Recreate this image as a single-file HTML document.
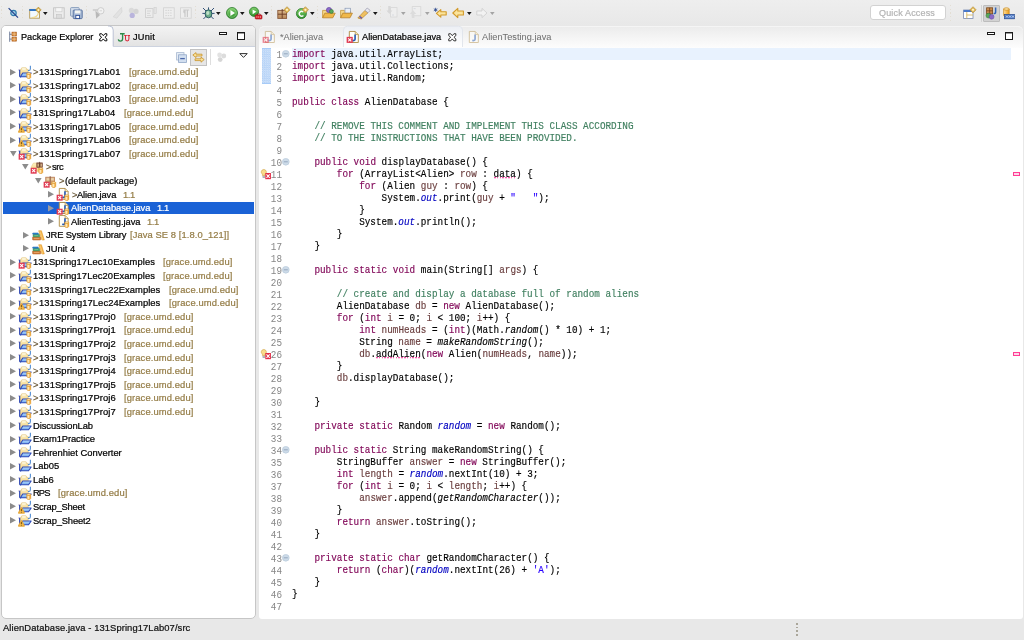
<!DOCTYPE html>
<html><head><meta charset="utf-8"><title>Eclipse</title>
<style>
html,body{margin:0;padding:0}
body{width:1024px;height:640px;overflow:hidden;position:relative;background:#e8e8e8;font-family:"Liberation Sans",sans-serif;}
.t{will-change:transform;position:absolute;white-space:pre;line-height:14px;height:14px;-webkit-text-stroke:0.22px}
.abs{position:absolute}
svg{position:absolute;overflow:visible}
symbol{overflow:visible}
#toolbar{position:absolute;left:0;top:0;width:1024px;height:26px;background:linear-gradient(#eeeeee,#e8e8e8);}
.panel{position:absolute;background:#fff;border:1px solid #d4d4d4;border-radius:6px;box-sizing:border-box;overflow:hidden}
.tabbar{position:absolute;left:0;top:0;right:0;height:20px;background:linear-gradient(#f4f4f4,#e6e6e6);border-bottom:1px solid #d0d0d0}
.code{will-change:transform;position:absolute;left:292px;height:12px;transform-origin:0 50%;transform:scaleY(1.08);font-family:"Liberation Mono",monospace;font-size:9.33px;line-height:12px;white-space:pre;color:#000;margin:0;-webkit-text-stroke:0.15px}
.ln{will-change:transform;position:absolute;left:261.2px;width:21px;height:12px;transform-origin:0 50%;transform:scaleY(1.08);text-align:right;font-family:"Liberation Mono",monospace;font-size:9.33px;line-height:12px;white-space:pre;color:#868686;margin:0}
.k{color:#7f0055}
.c{color:#3f7f5f}
.f{color:#0000c0;font-style:italic}
.v{color:#6a3e3e}
.s{color:#2a00ff}
.i{font-style:italic}
.e{background:repeating-linear-gradient(90deg,#f7359c 0 1.7px,transparent 1.7px 2.8px) 0 7.7px/100% 1.4px no-repeat}

</style></head>
<body>
<svg width="0" height="0" style="position:absolute">
<defs>
<linearGradient id="gBlue" x1="0" y1="0" x2="0" y2="1"><stop offset="0" stop-color="#bfe0fc"/><stop offset="1" stop-color="#68a4ee"/></linearGradient>
<linearGradient id="gYel" x1="0" y1="0" x2="0" y2="1"><stop offset="0" stop-color="#fdf1c4"/><stop offset="1" stop-color="#f3cf78"/></linearGradient>
<linearGradient id="gOr" x1="0" y1="0" x2="1" y2="0"><stop offset="0" stop-color="#fde0a0"/><stop offset="0.55" stop-color="#f6b84a"/><stop offset="1" stop-color="#e89c22"/></linearGradient>
<linearGradient id="gGreen" x1="0" y1="0" x2="0" y2="1"><stop offset="0" stop-color="#7fcf6a"/><stop offset="1" stop-color="#2f8f2c"/></linearGradient>
<linearGradient id="gBrown" x1="0" y1="0" x2="0" y2="1"><stop offset="0" stop-color="#d9b48a"/><stop offset="1" stop-color="#b98a5a"/></linearGradient>

<symbol id="d-cvs" viewBox="0 0 16 16"><path d="M10.9 10.6 v5.3 a2.6 1.2 0 0 0 5.2 0 v-5.3z" fill="#fbd185" stroke="#dd8d16" stroke-width="1"/><path d="M12.7 12 v4.4" stroke="#fff3d2" stroke-width="1.3"/><path d="M15.2 12 v4" stroke="#f0a030" stroke-width="0.9"/><ellipse cx="13.5" cy="10.6" rx="2.6" ry="1.2" fill="#fdebbc" stroke="#dd8d16" stroke-width="0.9"/></symbol>
<symbol id="d-err" viewBox="0 0 16 16"><rect x="-0.5" y="9.3" width="8.3" height="8.2" fill="#e03a52"/><path d="M1.6 11.3 l4.2 4.2 M5.8 11.3 l-4.2 4.2" stroke="#fff" stroke-width="1.5"/></symbol>
<symbol id="d-warn" viewBox="0 0 16 16"><path d="M3.4 9.4 L7.2 16.5 H-0.4z" fill="#f6c458" stroke="#e8aa3c" stroke-width="2" stroke-linejoin="round"/><path d="M3.4 11.2 v3 M3.4 15.1 v0.9" stroke="#5a4010" stroke-width="1.1"/></symbol>

<symbol id="i-proj" viewBox="0 0 16 16">
 <path d="M1.9 13.6 V4.7 h1.5 v-1.5 q0-0.7 0.7-0.7 h5.4 q0.7 0 0.7 0.7 v1.5 h2.5 v8.9z" fill="url(#gYel)" stroke="#dcbc6c" stroke-width="0.8"/>
 <rect x="4.4" y="3.4" width="4.8" height="1.4" fill="#fffdf2"/>
 <path d="M-0.7 5.5 h2.2" stroke="#6a62a8" stroke-width="1.1" fill="none"/><path d="M0.9 5.5 V13.9 q0 1 1 1 h1" stroke="#2f48b4" stroke-width="1.6" fill="none"/>
 <path d="M5.2 9.6 h11.6 l-3.6 5.2 h-11.2z" fill="url(#gBlue)" stroke="#2f4cba" stroke-width="1.5" stroke-linejoin="round"/>
 <path d="M15.7 -0.3 v4.2 q0 2.4 -2.2 2.4 h-1.2" stroke="#4f8bd2" stroke-width="1.5" fill="none"/>
</symbol>
<symbol id="i-src" viewBox="0 0 16 16">
 <path d="M0.6 14.6 V7.6 l2.8-4.8 h5 v5.8 h2.2 v6z" fill="url(#gYel)" stroke="#e4c880" stroke-width="0.7"/>
 <rect x="8" y="2.6" width="7.8" height="6.2" fill="#8e5e4a" stroke="#7a4a38" stroke-width="0.9"/>
 <path d="M9.9 3.8 v3.8 M14 3.8 v3.8" stroke="#f4dca4" stroke-width="1.3"/>
 <path d="M11.9 1.2 v7.6" stroke="#5a3222" stroke-width="1"/>
</symbol>
<symbol id="i-pkg" viewBox="0 0 16 16">
 <rect x="2.4" y="3" width="12.2" height="10.2" fill="#d9b38a" stroke="#b4774e" stroke-width="1"/>
 <rect x="3.8" y="4.4" width="3.6" height="3.2" fill="#ecd2a8"/><rect x="9.8" y="4.4" width="3.6" height="3.2" fill="#ecd2a8"/>
 <path d="M8.5 1.6 v11.6" stroke="#7a4630" stroke-width="1.1"/><path d="M2.4 8.6 h12.2" stroke="#b4774e" stroke-width="0.8"/>
</symbol>
<symbol id="i-jfile" viewBox="0 0 16 16">
 <path d="M1.8 0.6 h8 l4.2 4.2 v10.8 h-12.2z" fill="#fffef8" stroke="#ae8c44" stroke-width="1.25"/>
 <path d="M9.8 0.6 v4.2 h4.2" fill="#f5e8bc" stroke="#ae8c44" stroke-width="1"/>
 <path d="M9.6 4.6 v6.2 q0 2.8 -3.8 2" stroke="#2a5cb2" stroke-width="2.3" fill="none"/>
</symbol>
<symbol id="i-lib" viewBox="0 0 16 16">
 <rect x="0.9" y="10.9" width="11" height="4.2" rx="0.5" fill="#d4803e" stroke="#b0561c" stroke-width="0.8"/>
 <path d="M2.6 13 h7.4" stroke="#eeb078" stroke-width="1"/>
 <rect x="1.6" y="7.3" width="8.9" height="3.5" rx="0.5" fill="#3fa56a" stroke="#23804a" stroke-width="0.7"/>
 <path d="M3.2 9 h5.4" stroke="#8ed0a4" stroke-width="0.8"/>
 <rect x="0.9" y="5.4" width="7.8" height="1.9" rx="0.5" fill="#2f86d4" stroke="#1f62a8" stroke-width="0.6"/>
 <path d="M9.2 2.4 h3.8 l4 12.8 h-3.3z" fill="#f6b64a" stroke="#e0901c" stroke-width="0.7" stroke-linejoin="round"/>
 <path d="M11 3.4 l3.6 11.4" stroke="#fbd58c" stroke-width="0.9"/>
</symbol>
<symbol id="i-pkgexp" viewBox="0 0 16 16">
 <path d="M2.4 0.8 v14.4 M2.4 4.6 h3 M2.4 11.4 h3" stroke="#5a6a8a" stroke-width="1.2" fill="none"/>
 <rect x="5.6" y="1.6" width="6.2" height="5.4" fill="#d9893a" stroke="#a85a1a" stroke-width="0.9"/>
 <rect x="5.6" y="8.8" width="6.2" height="5.4" fill="#d9893a" stroke="#a85a1a" stroke-width="0.9"/>
 <path d="M5.6 4.3 h6.2 M8.7 1.6 v5.4 M5.6 11.5 h6.2 M8.7 8.8 v5.4" stroke="#f7dcb0" stroke-width="0.7"/>
</symbol>
</defs></svg>
<div id="toolbar"></div>
<div class="abs" style="left:0.50px;top:5.8px;width:1.2px;height:12.599999999999998px;background:repeating-linear-gradient(0deg,#e3ded4 0 1.2px,transparent 1.2px 3.7px)"></div>
<svg style="left:8.00px;top:7px" width="11" height="12" viewBox="0 0 11 12"><circle cx="5.5" cy="6" r="2.7" fill="#a4cde6" stroke="#2f7cad" stroke-width="1.2"/><path d="M0.6 1.2 L10 10.6" stroke="#22408a" stroke-width="1.2"/></svg>
<div class="abs" style="left:21.50px;top:5.8px;width:1.2px;height:12.599999999999998px;background:repeating-linear-gradient(0deg,#e3ded4 0 1.2px,transparent 1.2px 3.7px)"></div>
<svg style="left:29.00px;top:7px" width="13" height="12" viewBox="0 0 13 12"><rect x="0.7" y="2.4" width="9.8" height="8.8" fill="#f2f9ff" stroke="#b59a58" stroke-width="0.9"/><rect x="0.3" y="2" width="10.6" height="2" fill="#2f74c4"/><path d="M2.6 10.6 q6 0 6.8-5" stroke="#f0d890" stroke-width="1.2" fill="none"/><path d="M9.4 0.1 L12.2 2.9 L9.4 5.7 L6.6 2.9z" fill="#d8b050" stroke="#b08a30" stroke-width="0.6"/><circle cx="9.4" cy="2.9" r="1" fill="#fff4c8"/></svg>
<svg style="left:43.10px;top:12.10px" width="4.6" height="3"><path d="M0 0 H4.6 L2.3 3z" fill="#1a1a1a"/></svg>
<svg style="left:53.00px;top:7px" width="12" height="12" viewBox="0 0 12 12"><rect x="0.6" y="0.8" width="10.6" height="10.4" fill="#ececec" stroke="#c4c4c4" stroke-width="0.9"/><rect x="2.8" y="0.8" width="6.2" height="4" fill="#f6f6f6" stroke="#c8c8c8" stroke-width="0.6"/><rect x="3.4" y="7.4" width="5" height="3.8" fill="#dcdcdc" stroke="#c4c4c4" stroke-width="0.6"/></svg>
<svg style="left:70.00px;top:7px" width="13" height="12" viewBox="0 0 13 12"><rect x="0.6" y="0.6" width="8.6" height="8.6" rx="0.8" fill="#d5dfec" stroke="#7f96b8" stroke-width="0.9"/><rect x="3.2" y="3" width="9" height="8.6" rx="0.8" fill="#a9bbd6" stroke="#4f6b9c" stroke-width="0.9"/><rect x="5" y="3.4" width="5.4" height="3" fill="#f4f6f2"/><rect x="5.8" y="8.4" width="3.8" height="3.2" fill="#fff" stroke="#2f4f94" stroke-width="0.9"/></svg>
<div class="abs" style="left:85.50px;top:5.8px;width:1.2px;height:12.599999999999998px;background:repeating-linear-gradient(0deg,#e3ded4 0 1.2px,transparent 1.2px 3.7px)"></div>
<svg style="left:92.00px;top:7px" width="13" height="12" viewBox="0 0 13 12"><circle cx="8.8" cy="3.8" r="3.2" fill="#f2f2f2" stroke="#cacaca" stroke-width="0.9"/><path d="M0.8 3 h5.4" stroke="#c8c8c8" stroke-width="1.4"/><path d="M3.4 3.4 L8 8 L4.2 11.8z" fill="#b8b8b8"/><path d="M7.6 3.8 h2.4" stroke="#c8c8c8" stroke-width="0.7"/></svg>
<svg style="left:112.00px;top:7px" width="11" height="12" viewBox="0 0 11 12"><path d="M9.6 0.4 L1.2 9.8 l3.6 1.4 L10 5z" fill="#e2e2e2" stroke="#d2d2d2" stroke-width="0.6"/></svg>
<svg style="left:127.50px;top:7px" width="11" height="12" viewBox="0 0 11 12"><circle cx="3.4" cy="3.4" r="2.6" fill="#dadada"/><circle cx="8" cy="4.4" r="2.6" fill="#d4d4d4"/><circle cx="4.2" cy="8.4" r="2.6" fill="#b9b4dc"/></svg>
<svg style="left:145.00px;top:7px" width="12" height="12" viewBox="0 0 12 12"><rect x="0.6" y="1.6" width="7.4" height="9" fill="#ececec" stroke="#cdcdcd" stroke-width="0.8"/><path d="M2 4 h4 M2 6.4 h3 M2 8.6 h4" stroke="#d0d0d0" stroke-width="0.8"/><rect x="9" y="0.6" width="2.2" height="6" fill="#e6e6e6" stroke="#cdcdcd" stroke-width="0.6"/></svg>
<svg style="left:162.50px;top:7px" width="12" height="12" viewBox="0 0 12 12"><rect x="0.6" y="0.8" width="10.6" height="10.4" fill="#eeeeee" stroke="#d0d0d0" stroke-width="0.8"/><path d="M2.4 3.4 h7 M2.4 6 h7 M2.4 8.6 h7" stroke="#cfcfcf" stroke-width="0.9" stroke-dasharray="1.4 1"/></svg>
<svg style="left:180.00px;top:7px" width="12" height="12" viewBox="0 0 12 12"><rect x="0.6" y="0.8" width="10.6" height="10.4" fill="#eeeeee" stroke="#d0d0d0" stroke-width="0.8"/><path d="M5 3 v7 M7.4 3 v7 M3.2 3 h6" stroke="#cacaca" stroke-width="1.2" fill="none"/><path d="M5 3 a1.8 1.8 0 0 0 0 3.6z" fill="#cacaca"/></svg>
<div class="abs" style="left:194.50px;top:5.8px;width:1.2px;height:12.599999999999998px;background:repeating-linear-gradient(0deg,#e3ded4 0 1.2px,transparent 1.2px 3.7px)"></div>
<svg style="left:201.50px;top:7px" width="13" height="12" viewBox="0 0 13 12"><path d="M1 1 l3 3 M12 1 l-3 3 M0.4 6.4 h3 M12.6 6.4 h-3 M1.4 12 l3-3 M11.6 12 l-3-3 M6.5 0.4 v2.4" stroke="#1f3f6a" stroke-width="0.9"/><ellipse cx="6.5" cy="6.8" rx="3.4" ry="4" fill="#6fae8a" stroke="#1f4f5a" stroke-width="0.9"/><ellipse cx="5.8" cy="6" rx="1.6" ry="2" fill="#bfe0c8"/></svg>
<svg style="left:216.10px;top:12.10px" width="4.6" height="3"><path d="M0 0 H4.6 L2.3 3z" fill="#1a1a1a"/></svg>
<svg style="left:225.50px;top:7px" width="12" height="12" viewBox="0 0 12 12"><circle cx="6" cy="6" r="5.5" fill="url(#gGreen)" stroke="#2a7a2a" stroke-width="0.8"/><circle cx="6" cy="6" r="4.2" fill="none" stroke="#a8e09a" stroke-width="0.5"/><path d="M4.4 3 L9 6 L4.4 9z" fill="#fff"/></svg>
<svg style="left:240.00px;top:12.10px" width="4.6" height="3"><path d="M0 0 H4.6 L2.3 3z" fill="#1a1a1a"/></svg>
<svg style="left:249.00px;top:6.5px" width="13" height="13" viewBox="0 0 13 13"><circle cx="5" cy="4.8" r="4.6" fill="url(#gGreen)" stroke="#2a7a2a" stroke-width="0.8"/><path d="M3.6 2.4 L7.4 4.8 L3.6 7.2z" fill="#fff"/><rect x="6.2" y="8" width="6.8" height="4" rx="0.8" fill="#d8202a" stroke="#9a1018" stroke-width="0.6"/><path d="M8 8 v-1 h3.2 v1" stroke="#9a1018" stroke-width="0.7" fill="none"/><path d="M7.4 10 h1 M9.2 10 h1 M11 10 h1" stroke="#fff" stroke-width="0.8"/></svg>
<svg style="left:263.90px;top:12.10px" width="4.6" height="3"><path d="M0 0 H4.6 L2.3 3z" fill="#1a1a1a"/></svg>
<div class="abs" style="left:270.50px;top:5.8px;width:1.2px;height:12.599999999999998px;background:repeating-linear-gradient(0deg,#e3ded4 0 1.2px,transparent 1.2px 3.7px)"></div>
<svg style="left:277.00px;top:7px" width="13" height="12" viewBox="0 0 13 12"><rect x="0.8" y="3.4" width="8.8" height="8" fill="url(#gBrown)" stroke="#8a5a3a" stroke-width="0.9"/><path d="M5.2 2 v9.4 M0.8 7.2 h8.8" stroke="#6a3a22" stroke-width="0.9"/><path d="M10.0 -0.3 L13.1 2.8 L10.0 5.9 L6.9 2.8z" fill="#e0b85a" stroke="#b08a30" stroke-width="0.6"/><circle cx="10.0" cy="2.8" r="1.1" fill="#fff4c8"/></svg>
<svg style="left:296.00px;top:7px" width="12" height="12" viewBox="0 0 12 12"><circle cx="5.4" cy="6.6" r="5" fill="url(#gGreen)" stroke="#2a7a2a" stroke-width="0.8"/><path d="M7.4 5 a2.4 2.4 0 1 0 0 3.4" stroke="#fff" stroke-width="1.4" fill="none"/><path d="M9.4 -0.3 L12.5 2.8 L9.4 5.9 L6.3 2.8z" fill="#e0b85a" stroke="#b08a30" stroke-width="0.6"/><circle cx="9.4" cy="2.8" r="1.1" fill="#fff4c8"/></svg>
<svg style="left:309.70px;top:12.10px" width="4.6" height="3"><path d="M0 0 H4.6 L2.3 3z" fill="#1a1a1a"/></svg>
<div class="abs" style="left:317.00px;top:5.8px;width:1.2px;height:12.599999999999998px;background:repeating-linear-gradient(0deg,#e3ded4 0 1.2px,transparent 1.2px 3.7px)"></div>
<svg style="left:322.00px;top:7px" width="14" height="12" viewBox="0 0 14 12"><path d="M0.6 10.8 V3.4 h3.6 l1 1.2 h5.4 v2" fill="#f4d78a" stroke="#c8983a" stroke-width="0.8"/><path d="M0.6 10.8 l2.2-4.6 h10.4 l-2.4 4.6z" fill="#f0b84a" stroke="#b8802a" stroke-width="0.8"/><circle cx="7" cy="3" r="2.6" fill="#8a6ac8" stroke="#5a3a9a" stroke-width="0.6"/><circle cx="9.4" cy="4.4" r="2" fill="#58a858" stroke="#2f6f2f" stroke-width="0.5"/></svg>
<svg style="left:340.00px;top:7px" width="13" height="12" viewBox="0 0 13 12"><path d="M0.6 10.8 V3.4 h3.6 l1 1.2 h5.4 v2" fill="#f4d78a" stroke="#c8983a" stroke-width="0.8"/><rect x="5" y="1.2" width="5.4" height="5" fill="#e8eef8" stroke="#7a8aa8" stroke-width="0.6"/><path d="M0.6 10.8 l2.2-4.6 h9.6 l-2.4 4.6z" fill="#f0b84a" stroke="#b8802a" stroke-width="0.8"/></svg>
<svg style="left:357.00px;top:7px" width="14" height="12" viewBox="0 0 14 12"><path d="M0.8 11 L8 3.4 l3 2.4 L4.2 12z" fill="#f0c060" stroke="#b8862a" stroke-width="0.7"/><path d="M8 3.4 l2.2-2.4 l3 2.4 l-2.2 2.4z" fill="#e8e8f0" stroke="#8a8aa0" stroke-width="0.6"/><path d="M2.4 9.4 l2.6 2" stroke="#6a5ab0" stroke-width="1.4"/></svg>
<svg style="left:372.70px;top:12.10px" width="4.6" height="3"><path d="M0 0 H4.6 L2.3 3z" fill="#1a1a1a"/></svg>
<div class="abs" style="left:380.00px;top:5.8px;width:1.2px;height:12.599999999999998px;background:repeating-linear-gradient(0deg,#e3ded4 0 1.2px,transparent 1.2px 3.7px)"></div>
<svg style="left:385.50px;top:6.4px" width="12" height="12" viewBox="0 0 12 12"><rect x="4.6" y="1.6" width="6.4" height="9.4" fill="#eeeeee" stroke="#d6d6d6" stroke-width="0.8"/><path d="M2.2 0 h2.4 v4.4 h1.8 l-3 3.6 l-3-3.6 h1.8z" fill="#d8d8d8"/><path d="M6 9 h2" stroke="#d0d4dc" stroke-width="0.8"/></svg>
<svg style="left:400.70px;top:12.10px" width="4.6" height="3"><path d="M0 0 H4.6 L2.3 3z" fill="#a4a4a4"/></svg>
<svg style="left:409.60px;top:6.2px" width="12" height="12" viewBox="0 0 12 12"><rect x="2.2" y="0.6" width="8.6" height="9.2" fill="#eeeeee" stroke="#d6d6d6" stroke-width="0.8"/><path d="M1.8 12 h2.6 v-4 h1.9 l-3.2-3.8 l-3.2 3.8 h1.9z" fill="#dcdcdc"/><path d="M3.6 2.6 h2" stroke="#d0d4dc" stroke-width="0.8"/></svg>
<svg style="left:425.10px;top:12.10px" width="4.6" height="3"><path d="M0 0 H4.6 L2.3 3z" fill="#a4a4a4"/></svg>
<svg style="left:433.00px;top:7px" width="14" height="12" viewBox="0 0 14 12"><path d="M3.4 6.4 l4.4-3.8 v2.2 h5.4 v3.2 h-5.4 v2.2z" fill="#fbe49c" stroke="#d29a2a" stroke-width="1.1" stroke-linejoin="round"/><path d="M2.6 0.8 v4 M0.8 1.8 l3.6 2 M4.4 1.8 l-3.6 2" stroke="#2a468c" stroke-width="0.8"/></svg>
<svg style="left:451.50px;top:7px" width="12" height="12" viewBox="0 0 12 12"><path d="M0.8 6 l5-4.6 v2.6 h5.6 v4 h-5.6 v2.6z" fill="#fbe49c" stroke="#d29a2a" stroke-width="1.1" stroke-linejoin="round"/></svg>
<svg style="left:466.70px;top:12.10px" width="4.6" height="3"><path d="M0 0 H4.6 L2.3 3z" fill="#1a1a1a"/></svg>
<svg style="left:476.00px;top:7px" width="12" height="12" viewBox="0 0 12 12"><path d="M11 6 l-5-4.6 v2.6 h-5.2 v4 h5.2 v2.6z" fill="#f2f2f2" stroke="#d0d0d0" stroke-width="0.9" stroke-linejoin="round"/></svg>
<svg style="left:490.30px;top:12.10px" width="4.6" height="3"><path d="M0 0 H4.6 L2.3 3z" fill="#a4a4a4"/></svg>
<div class="abs" style="left:870px;top:5.2px;width:75.5px;height:14.4px;box-sizing:border-box;border:1px solid #d2d2d2;border-radius:3px;background:#fff"></div>
<span class="t" style="left:878.80px;top:5.90px;font-size:9px;letter-spacing:0.164px;color:#b4b4b4;">Quick Access</span>
<div class="abs" style="left:949.50px;top:4px;width:1.2px;height:17px;background:repeating-linear-gradient(0deg,#e3ded4 0 1.2px,transparent 1.2px 3.7px)"></div>
<svg style="left:963.00px;top:7px" width="13" height="12" viewBox="0 0 13 12"><rect x="0.6" y="3" width="9.4" height="8.4" fill="#fff" stroke="#7a8ab0" stroke-width="0.8"/><rect x="0.6" y="3" width="9.4" height="2" fill="#4a78c8"/><path d="M3.8 5 v6.4 M3.8 8 h6.2" stroke="#d8b860" stroke-width="0.9"/><path d="M10.0 -0.3 L13.1 2.8 L10.0 5.9 L6.9 2.8z" fill="#e0b85a" stroke="#b08a30" stroke-width="0.6"/><circle cx="10.0" cy="2.8" r="1.1" fill="#fff4c8"/></svg>
<div class="abs" style="left:980.5px;top:5px;width:1px;height:17px;background:#d4d4d4"></div>
<div class="abs" style="left:982.5px;top:5px;width:17.5px;height:17px;box-sizing:border-box;border:1px solid #bdbdbd;background:#d2d2d2;border-radius:1px"></div>
<svg style="left:985.00px;top:7px" width="13" height="13" viewBox="0 0 13 13"><rect x="1.6" y="0.8" width="6" height="6" fill="#c88a4a" stroke="#7a4a22" stroke-width="0.8"/><path d="M4.6 0.8 v6 M1.6 3.8 h6" stroke="#6a3a1a" stroke-width="0.7"/><path d="M10.6 0.6 v4.6 q0 1.6 -2 1.4" stroke="#2f63b8" stroke-width="1.5" fill="none"/><circle cx="3.4" cy="8.6" r="2.4" fill="#58a858" stroke="#2f6f2f" stroke-width="0.5"/><circle cx="6.6" cy="9.8" r="2.4" fill="#8a6ac8" stroke="#5a3a9a" stroke-width="0.5"/></svg>
<svg style="left:1002.40px;top:7px" width="13" height="13" viewBox="0 0 13 13"><path d="M1.6 2 v6.4 a2.8 1.2 0 0 0 5.6 0 v-6.4z" fill="url(#gOr)" stroke="#c8861a" stroke-width="0.7"/><ellipse cx="4.4" cy="2" rx="2.8" ry="1.2" fill="#fbe3a6" stroke="#c8861a" stroke-width="0.7"/><rect x="2.6" y="7.4" width="10" height="4.4" fill="#4a78c8" stroke="#2a4a8a" stroke-width="0.7"/><path d="M4 8.6 l2 2 M6 8.6 l-2 2 M7 8.6 l2 2 M9 8.6 l-2 2 M10 8.6 l2 2 M12 8.6 l-2 2" stroke="#fff" stroke-width="0.6"/></svg>
<div class="panel" style="left:1px;top:25px;width:255.4px;height:593.8px;border-color:#c6c6c6;border-radius:5px"><div class="tabbar" style="height:19.6px;background:linear-gradient(#f3f3f3,#e3e3e3);border-bottom:1px solid #cdd3df"></div></div>
<svg style="left:0px;top:0px" width="130" height="50" viewBox="0 0 130 50"><path d="M2 47.4 V30.5 Q2 26 6.5 26 H109.2 Q113.2 26 113.2 30 V47.4z" fill="#fff"/><path d="M108 26 H109.2 Q113.2 26 113.2 30 V46.4" fill="none" stroke="#b4bcd0" stroke-width="0.9"/></svg>
<svg style="left:7.60px;top:30.60px;" width="11.4" height="11.4"><use href="#i-pkgexp"/></svg>
<span class="t" style="left:20.80px;top:30.30px;font-size:9.2px;letter-spacing:-0.008px;color:#000;">Package Explorer</span>
<svg style="left:98.6px;top:32.6px" width="8.6" height="8.6" viewBox="0 0 9 9"><path d="M0.8 0.8 h2 L4.5 2.8 L6.2 0.8 h2 v2 L6.2 4.5 L8.2 6.2 v2 h-2 L4.5 6.2 L2.8 8.2 h-2 v-2 L2.8 4.5 L0.8 2.8z" fill="#fff" stroke="#000" stroke-width="1"/></svg>
<svg style="left:117px;top:32px" width="14" height="10" viewBox="0 0 14 10"><path d="M3 1.7 H7.7 M5.6 1.7 V6.8 Q5.6 9.1 3.3 9.1 Q1.5 9.1 1.3 7.4" fill="none" stroke="#2c8a48" stroke-width="1.35"/><path d="M7.2 3.5 h2.6 M10.4 3.5 h2.6 M8.5 3.5 V7.1 Q8.5 9 10.2 9 Q11.9 9 11.9 7.1 V3.5" fill="none" stroke="#d8283a" stroke-width="1.05"/></svg>
<span class="t" style="left:133.00px;top:30.30px;font-size:9.2px;letter-spacing:0.212px;color:#000;">JUnit</span>
<div class="abs" style="left:219px;top:32px;width:8px;height:3px;box-sizing:border-box;border:1px solid #1a1a1a;background:#fff"></div><div class="abs" style="left:237.2px;top:32.2px;width:8.2px;height:7.6px;box-sizing:border-box;border:1.1px solid #1a1a1a;background:linear-gradient(#999 0 1.4px,#fff 1.4px)"></div>
<svg style="left:176px;top:52px" width="11" height="11" viewBox="0 0 11 11"><rect x="0.6" y="0.6" width="7.4" height="7.4" fill="#e6edf6" stroke="#a9b9d0" stroke-width="0.8"/><rect x="2.6" y="2.8" width="7.8" height="7.6" fill="#d2dff0" stroke="#8fa5c6" stroke-width="0.8"/><path d="M4.2 6.6 h4.6" stroke="#4a66a8" stroke-width="1.3"/></svg>
<div class="abs" style="left:190px;top:48.5px;width:17.4px;height:17.2px;box-sizing:border-box;border:1px solid #c2c2c2;background:#e6e6e6"></div>
<svg style="left:192.4px;top:51.6px" width="13" height="11" viewBox="0 0 13 11"><path d="M0.8 3 L4 0.6 v1.6 h6 v1.8 h-6 v1.6z" fill="#fbe39a" stroke="#c8922a" stroke-width="0.8" stroke-linejoin="round"/><path d="M12.2 7.6 L9 5.2 v1.6 h-6 v1.8 h6 v1.6z" fill="#fbe39a" stroke="#c8922a" stroke-width="0.8" stroke-linejoin="round"/></svg>
<div class="abs" style="left:210px;top:49px;width:1px;height:16px;background:#dedede"></div>
<svg style="left:216px;top:52px" width="11" height="11" viewBox="0 0 11 11"><circle cx="3.6" cy="3" r="2.4" fill="#e2e2e2"/><circle cx="7.8" cy="4" r="2.4" fill="#dcdcdc"/><circle cx="4.2" cy="7.6" r="2.4" fill="#d6d6d6"/></svg>
<svg style="left:239px;top:53px" width="9" height="5" viewBox="0 0 9 5"><path d="M0.8 0.6 H8.2 L4.5 4.4z" fill="#fff" stroke="#1a1a1a" stroke-width="0.9" stroke-linejoin="round"/></svg>
<svg style="left:9.60px;top:68.65px" width="6" height="6.6"><path d="M0 0 V6.6 L6 3.3z" fill="#8c8c8c"/></svg>
<svg style="left:18.50px;top:65.95px;" width="11.6" height="11.6"><use href="#i-proj"/></svg>
<svg style="left:18.50px;top:65.95px;" width="11.6" height="11.6"><use href="#d-cvs"/></svg>
<span class="t" style="left:33.00px;top:65.25px;font-size:9.4px;letter-spacing:0.000px;color:#6b5a3a;">&gt;</span>
<span class="t" style="left:39.40px;top:65.25px;font-size:9.4px;letter-spacing:0.147px;color:#000;">131Spring17Lab01</span>
<span class="t" style="left:129.00px;top:65.25px;font-size:9.4px;letter-spacing:0.117px;color:#957d47;">[grace.umd.edu]</span>
<svg style="left:9.60px;top:82.24px" width="6" height="6.6"><path d="M0 0 V6.6 L6 3.3z" fill="#8c8c8c"/></svg>
<svg style="left:18.50px;top:79.54px;" width="11.6" height="11.6"><use href="#i-proj"/></svg>
<svg style="left:18.50px;top:79.54px;" width="11.6" height="11.6"><use href="#d-cvs"/></svg>
<span class="t" style="left:33.00px;top:78.84px;font-size:9.4px;letter-spacing:0.000px;color:#6b5a3a;">&gt;</span>
<span class="t" style="left:39.40px;top:78.84px;font-size:9.4px;letter-spacing:0.147px;color:#000;">131Spring17Lab02</span>
<span class="t" style="left:129.00px;top:78.84px;font-size:9.4px;letter-spacing:0.117px;color:#957d47;">[grace.umd.edu]</span>
<svg style="left:9.60px;top:95.82px" width="6" height="6.6"><path d="M0 0 V6.6 L6 3.3z" fill="#8c8c8c"/></svg>
<svg style="left:18.50px;top:93.12px;" width="11.6" height="11.6"><use href="#i-proj"/></svg>
<svg style="left:18.50px;top:93.12px;" width="11.6" height="11.6"><use href="#d-cvs"/></svg>
<span class="t" style="left:33.00px;top:92.42px;font-size:9.4px;letter-spacing:0.000px;color:#6b5a3a;">&gt;</span>
<span class="t" style="left:39.40px;top:92.42px;font-size:9.4px;letter-spacing:0.147px;color:#000;">131Spring17Lab03</span>
<span class="t" style="left:129.00px;top:92.42px;font-size:9.4px;letter-spacing:0.117px;color:#957d47;">[grace.umd.edu]</span>
<svg style="left:9.60px;top:109.41px" width="6" height="6.6"><path d="M0 0 V6.6 L6 3.3z" fill="#8c8c8c"/></svg>
<svg style="left:18.50px;top:106.71px;" width="11.6" height="11.6"><use href="#i-proj"/></svg>
<svg style="left:18.50px;top:106.71px;" width="11.6" height="11.6"><use href="#d-cvs"/></svg>
<span class="t" style="left:33.00px;top:106.01px;font-size:9.4px;letter-spacing:0.203px;color:#000;">131Spring17Lab04</span>
<span class="t" style="left:123.50px;top:106.01px;font-size:9.4px;letter-spacing:0.117px;color:#957d47;">[grace.umd.edu]</span>
<svg style="left:9.60px;top:123.00px" width="6" height="6.6"><path d="M0 0 V6.6 L6 3.3z" fill="#8c8c8c"/></svg>
<svg style="left:18.50px;top:120.30px;" width="11.6" height="11.6"><use href="#i-proj"/></svg>
<svg style="left:18.50px;top:120.30px;" width="11.6" height="11.6"><use href="#d-warn"/></svg>
<svg style="left:18.50px;top:120.30px;" width="11.6" height="11.6"><use href="#d-cvs"/></svg>
<span class="t" style="left:33.00px;top:119.60px;font-size:9.4px;letter-spacing:0.000px;color:#6b5a3a;">&gt;</span>
<span class="t" style="left:39.40px;top:119.60px;font-size:9.4px;letter-spacing:0.147px;color:#000;">131Spring17Lab05</span>
<span class="t" style="left:129.00px;top:119.60px;font-size:9.4px;letter-spacing:0.117px;color:#957d47;">[grace.umd.edu]</span>
<svg style="left:9.60px;top:136.58px" width="6" height="6.6"><path d="M0 0 V6.6 L6 3.3z" fill="#8c8c8c"/></svg>
<svg style="left:18.50px;top:133.88px;" width="11.6" height="11.6"><use href="#i-proj"/></svg>
<svg style="left:18.50px;top:133.88px;" width="11.6" height="11.6"><use href="#d-warn"/></svg>
<svg style="left:18.50px;top:133.88px;" width="11.6" height="11.6"><use href="#d-cvs"/></svg>
<span class="t" style="left:33.00px;top:133.19px;font-size:9.4px;letter-spacing:0.000px;color:#6b5a3a;">&gt;</span>
<span class="t" style="left:39.40px;top:133.19px;font-size:9.4px;letter-spacing:0.147px;color:#000;">131Spring17Lab06</span>
<span class="t" style="left:129.00px;top:133.19px;font-size:9.4px;letter-spacing:0.117px;color:#957d47;">[grace.umd.edu]</span>
<svg style="left:9.50px;top:150.87px" width="6.6" height="5.6"><path d="M0 0 H6.6 L3.3 5.6z" fill="#8c8c8c"/></svg>
<svg style="left:18.50px;top:147.47px;" width="11.6" height="11.6"><use href="#i-proj"/></svg>
<svg style="left:18.50px;top:147.47px;" width="11.6" height="11.6"><use href="#d-err"/></svg>
<svg style="left:18.50px;top:147.47px;" width="11.6" height="11.6"><use href="#d-cvs"/></svg>
<span class="t" style="left:33.00px;top:146.77px;font-size:9.4px;letter-spacing:0.000px;color:#6b5a3a;">&gt;</span>
<span class="t" style="left:39.40px;top:146.77px;font-size:9.4px;letter-spacing:0.147px;color:#000;">131Spring17Lab07</span>
<span class="t" style="left:129.00px;top:146.77px;font-size:9.4px;letter-spacing:0.117px;color:#957d47;">[grace.umd.edu]</span>
<svg style="left:22.40px;top:164.46px" width="6.6" height="5.6"><path d="M0 0 H6.6 L3.3 5.6z" fill="#8c8c8c"/></svg>
<svg style="left:31.40px;top:161.06px;" width="11.6" height="11.6"><use href="#i-src"/></svg>
<svg style="left:31.40px;top:161.06px;" width="11.6" height="11.6"><use href="#d-err"/></svg>
<svg style="left:31.40px;top:161.06px;" width="11.6" height="11.6"><use href="#d-cvs"/></svg>
<span class="t" style="left:45.90px;top:160.36px;font-size:9.4px;letter-spacing:0.000px;color:#6b5a3a;">&gt;</span>
<span class="t" style="left:52.30px;top:160.36px;font-size:9.4px;letter-spacing:-0.350px;color:#000;">src</span>
<svg style="left:35.30px;top:178.05px" width="6.6" height="5.6"><path d="M0 0 H6.6 L3.3 5.6z" fill="#8c8c8c"/></svg>
<svg style="left:44.30px;top:174.65px;" width="11.6" height="11.6"><use href="#i-pkg"/></svg>
<svg style="left:44.30px;top:174.65px;" width="11.6" height="11.6"><use href="#d-err"/></svg>
<svg style="left:44.30px;top:174.65px;" width="11.6" height="11.6"><use href="#d-cvs"/></svg>
<span class="t" style="left:58.80px;top:173.95px;font-size:9.4px;letter-spacing:0.000px;color:#6b5a3a;">&gt;</span>
<span class="t" style="left:65.20px;top:173.95px;font-size:9.4px;letter-spacing:-0.009px;color:#000;">(default package)</span>
<svg style="left:48.30px;top:190.93px" width="6" height="6.6"><path d="M0 0 V6.6 L6 3.3z" fill="#8c8c8c"/></svg>
<svg style="left:58.00px;top:188.23px;" width="11.6" height="11.6"><use href="#i-jfile"/></svg>
<svg style="left:57.20px;top:188.23px;" width="11.6" height="11.6"><use href="#d-err"/></svg>
<svg style="left:57.20px;top:188.23px;" width="11.6" height="11.6"><use href="#d-cvs"/></svg>
<span class="t" style="left:71.70px;top:187.53px;font-size:9.4px;letter-spacing:0.000px;color:#6b5a3a;">&gt;</span>
<span class="t" style="left:77.00px;top:187.53px;font-size:9.4px;letter-spacing:-0.141px;color:#000;">Alien.java</span>
<span class="t" style="left:122.50px;top:187.53px;font-size:9.4px;letter-spacing:-0.349px;color:#957d47;">1.1</span>
<div class="abs" style="left:3px;top:201.72px;width:250.7px;height:12.3px;background:#1a62d6"></div>
<svg style="left:48.30px;top:204.52px" width="6" height="6.6"><path d="M0 0 V6.6 L6 3.3z" fill="#9a9aa0"/></svg>
<svg style="left:58.00px;top:201.82px;" width="11.6" height="11.6"><use href="#i-jfile"/></svg>
<svg style="left:57.20px;top:201.82px;" width="11.6" height="11.6"><use href="#d-err"/></svg>
<svg style="left:57.20px;top:201.82px;" width="11.6" height="11.6"><use href="#d-cvs"/></svg>
<span class="t" style="left:71.20px;top:201.12px;font-size:9.4px;letter-spacing:-0.083px;color:#fff;">AlienDatabase.java</span>
<span class="t" style="left:156.75px;top:201.12px;font-size:9.4px;letter-spacing:-0.349px;color:#fff;">1.1</span>
<svg style="left:48.30px;top:218.11px" width="6" height="6.6"><path d="M0 0 V6.6 L6 3.3z" fill="#8c8c8c"/></svg>
<svg style="left:58.00px;top:215.41px;" width="11.6" height="11.6"><use href="#i-jfile"/></svg>
<svg style="left:57.20px;top:215.41px;" width="11.6" height="11.6"><use href="#d-cvs"/></svg>
<span class="t" style="left:71.20px;top:214.71px;font-size:9.4px;letter-spacing:-0.048px;color:#000;">AlienTesting.java</span>
<span class="t" style="left:147.00px;top:214.71px;font-size:9.4px;letter-spacing:-0.349px;color:#957d47;">1.1</span>
<svg style="left:22.50px;top:231.69px" width="6" height="6.6"><path d="M0 0 V6.6 L6 3.3z" fill="#8c8c8c"/></svg>
<svg style="left:32.20px;top:228.99px;" width="11.6" height="11.6"><use href="#i-lib"/></svg>
<span class="t" style="left:45.90px;top:228.29px;font-size:9.4px;letter-spacing:-0.139px;color:#000;">JRE System Library</span>
<span class="t" style="left:129.50px;top:228.29px;font-size:9.4px;letter-spacing:0.077px;color:#957d47;">[Java SE 8 [1.8.0_121]]</span>
<svg style="left:22.50px;top:245.28px" width="6" height="6.6"><path d="M0 0 V6.6 L6 3.3z" fill="#8c8c8c"/></svg>
<svg style="left:32.20px;top:242.58px;" width="11.6" height="11.6"><use href="#i-lib"/></svg>
<span class="t" style="left:45.90px;top:241.88px;font-size:9.4px;letter-spacing:-0.012px;color:#000;">JUnit 4</span>
<svg style="left:9.60px;top:258.87px" width="6" height="6.6"><path d="M0 0 V6.6 L6 3.3z" fill="#8c8c8c"/></svg>
<svg style="left:18.50px;top:256.17px;" width="11.6" height="11.6"><use href="#i-proj"/></svg>
<svg style="left:18.50px;top:256.17px;" width="11.6" height="11.6"><use href="#d-err"/></svg>
<svg style="left:18.50px;top:256.17px;" width="11.6" height="11.6"><use href="#d-cvs"/></svg>
<span class="t" style="left:33.00px;top:255.47px;font-size:9.4px;letter-spacing:0.089px;color:#000;">131Spring17Lec10Examples</span>
<span class="t" style="left:163.00px;top:255.47px;font-size:9.4px;letter-spacing:0.117px;color:#957d47;">[grace.umd.edu]</span>
<svg style="left:9.60px;top:272.45px" width="6" height="6.6"><path d="M0 0 V6.6 L6 3.3z" fill="#8c8c8c"/></svg>
<svg style="left:18.50px;top:269.75px;" width="11.6" height="11.6"><use href="#i-proj"/></svg>
<svg style="left:18.50px;top:269.75px;" width="11.6" height="11.6"><use href="#d-cvs"/></svg>
<span class="t" style="left:33.00px;top:269.06px;font-size:9.4px;letter-spacing:0.089px;color:#000;">131Spring17Lec20Examples</span>
<span class="t" style="left:163.00px;top:269.06px;font-size:9.4px;letter-spacing:0.117px;color:#957d47;">[grace.umd.edu]</span>
<svg style="left:9.60px;top:286.04px" width="6" height="6.6"><path d="M0 0 V6.6 L6 3.3z" fill="#8c8c8c"/></svg>
<svg style="left:18.50px;top:283.34px;" width="11.6" height="11.6"><use href="#i-proj"/></svg>
<svg style="left:18.50px;top:283.34px;" width="11.6" height="11.6"><use href="#d-cvs"/></svg>
<span class="t" style="left:33.00px;top:282.64px;font-size:9.4px;letter-spacing:0.000px;color:#6b5a3a;">&gt;</span>
<span class="t" style="left:39.40px;top:282.64px;font-size:9.4px;letter-spacing:0.061px;color:#000;">131Spring17Lec22Examples</span>
<span class="t" style="left:168.75px;top:282.64px;font-size:9.4px;letter-spacing:0.117px;color:#957d47;">[grace.umd.edu]</span>
<svg style="left:9.60px;top:299.63px" width="6" height="6.6"><path d="M0 0 V6.6 L6 3.3z" fill="#8c8c8c"/></svg>
<svg style="left:18.50px;top:296.93px;" width="11.6" height="11.6"><use href="#i-proj"/></svg>
<svg style="left:18.50px;top:296.93px;" width="11.6" height="11.6"><use href="#d-warn"/></svg>
<svg style="left:18.50px;top:296.93px;" width="11.6" height="11.6"><use href="#d-cvs"/></svg>
<span class="t" style="left:33.00px;top:296.23px;font-size:9.4px;letter-spacing:0.000px;color:#6b5a3a;">&gt;</span>
<span class="t" style="left:39.40px;top:296.23px;font-size:9.4px;letter-spacing:0.061px;color:#000;">131Spring17Lec24Examples</span>
<span class="t" style="left:168.75px;top:296.23px;font-size:9.4px;letter-spacing:0.117px;color:#957d47;">[grace.umd.edu]</span>
<svg style="left:9.60px;top:313.22px" width="6" height="6.6"><path d="M0 0 V6.6 L6 3.3z" fill="#8c8c8c"/></svg>
<svg style="left:18.50px;top:310.52px;" width="11.6" height="11.6"><use href="#i-proj"/></svg>
<svg style="left:18.50px;top:310.52px;" width="11.6" height="11.6"><use href="#d-cvs"/></svg>
<span class="t" style="left:33.00px;top:309.82px;font-size:9.4px;letter-spacing:0.000px;color:#6b5a3a;">&gt;</span>
<span class="t" style="left:39.40px;top:309.82px;font-size:9.4px;letter-spacing:0.112px;color:#000;">131Spring17Proj0</span>
<span class="t" style="left:124.25px;top:309.82px;font-size:9.4px;letter-spacing:0.117px;color:#957d47;">[grace.umd.edu]</span>
<svg style="left:9.60px;top:326.80px" width="6" height="6.6"><path d="M0 0 V6.6 L6 3.3z" fill="#8c8c8c"/></svg>
<svg style="left:18.50px;top:324.10px;" width="11.6" height="11.6"><use href="#i-proj"/></svg>
<svg style="left:18.50px;top:324.10px;" width="11.6" height="11.6"><use href="#d-cvs"/></svg>
<span class="t" style="left:33.00px;top:323.40px;font-size:9.4px;letter-spacing:0.000px;color:#6b5a3a;">&gt;</span>
<span class="t" style="left:39.40px;top:323.40px;font-size:9.4px;letter-spacing:0.112px;color:#000;">131Spring17Proj1</span>
<span class="t" style="left:124.25px;top:323.40px;font-size:9.4px;letter-spacing:0.117px;color:#957d47;">[grace.umd.edu]</span>
<svg style="left:9.60px;top:340.39px" width="6" height="6.6"><path d="M0 0 V6.6 L6 3.3z" fill="#8c8c8c"/></svg>
<svg style="left:18.50px;top:337.69px;" width="11.6" height="11.6"><use href="#i-proj"/></svg>
<svg style="left:18.50px;top:337.69px;" width="11.6" height="11.6"><use href="#d-cvs"/></svg>
<span class="t" style="left:33.00px;top:336.99px;font-size:9.4px;letter-spacing:0.000px;color:#6b5a3a;">&gt;</span>
<span class="t" style="left:39.40px;top:336.99px;font-size:9.4px;letter-spacing:0.112px;color:#000;">131Spring17Proj2</span>
<span class="t" style="left:124.25px;top:336.99px;font-size:9.4px;letter-spacing:0.117px;color:#957d47;">[grace.umd.edu]</span>
<svg style="left:9.60px;top:353.98px" width="6" height="6.6"><path d="M0 0 V6.6 L6 3.3z" fill="#8c8c8c"/></svg>
<svg style="left:18.50px;top:351.28px;" width="11.6" height="11.6"><use href="#i-proj"/></svg>
<svg style="left:18.50px;top:351.28px;" width="11.6" height="11.6"><use href="#d-cvs"/></svg>
<span class="t" style="left:33.00px;top:350.58px;font-size:9.4px;letter-spacing:0.000px;color:#6b5a3a;">&gt;</span>
<span class="t" style="left:39.40px;top:350.58px;font-size:9.4px;letter-spacing:0.112px;color:#000;">131Spring17Proj3</span>
<span class="t" style="left:124.25px;top:350.58px;font-size:9.4px;letter-spacing:0.117px;color:#957d47;">[grace.umd.edu]</span>
<svg style="left:9.60px;top:367.56px" width="6" height="6.6"><path d="M0 0 V6.6 L6 3.3z" fill="#8c8c8c"/></svg>
<svg style="left:18.50px;top:364.86px;" width="11.6" height="11.6"><use href="#i-proj"/></svg>
<svg style="left:18.50px;top:364.86px;" width="11.6" height="11.6"><use href="#d-cvs"/></svg>
<span class="t" style="left:33.00px;top:364.16px;font-size:9.4px;letter-spacing:0.000px;color:#6b5a3a;">&gt;</span>
<span class="t" style="left:39.40px;top:364.16px;font-size:9.4px;letter-spacing:0.112px;color:#000;">131Spring17Proj4</span>
<span class="t" style="left:124.25px;top:364.16px;font-size:9.4px;letter-spacing:0.117px;color:#957d47;">[grace.umd.edu]</span>
<svg style="left:9.60px;top:381.15px" width="6" height="6.6"><path d="M0 0 V6.6 L6 3.3z" fill="#8c8c8c"/></svg>
<svg style="left:18.50px;top:378.45px;" width="11.6" height="11.6"><use href="#i-proj"/></svg>
<svg style="left:18.50px;top:378.45px;" width="11.6" height="11.6"><use href="#d-cvs"/></svg>
<span class="t" style="left:33.00px;top:377.75px;font-size:9.4px;letter-spacing:0.000px;color:#6b5a3a;">&gt;</span>
<span class="t" style="left:39.40px;top:377.75px;font-size:9.4px;letter-spacing:0.112px;color:#000;">131Spring17Proj5</span>
<span class="t" style="left:124.25px;top:377.75px;font-size:9.4px;letter-spacing:0.117px;color:#957d47;">[grace.umd.edu]</span>
<svg style="left:9.60px;top:394.74px" width="6" height="6.6"><path d="M0 0 V6.6 L6 3.3z" fill="#8c8c8c"/></svg>
<svg style="left:18.50px;top:392.04px;" width="11.6" height="11.6"><use href="#i-proj"/></svg>
<svg style="left:18.50px;top:392.04px;" width="11.6" height="11.6"><use href="#d-cvs"/></svg>
<span class="t" style="left:33.00px;top:391.34px;font-size:9.4px;letter-spacing:0.000px;color:#6b5a3a;">&gt;</span>
<span class="t" style="left:39.40px;top:391.34px;font-size:9.4px;letter-spacing:0.112px;color:#000;">131Spring17Proj6</span>
<span class="t" style="left:124.25px;top:391.34px;font-size:9.4px;letter-spacing:0.117px;color:#957d47;">[grace.umd.edu]</span>
<svg style="left:9.60px;top:408.32px" width="6" height="6.6"><path d="M0 0 V6.6 L6 3.3z" fill="#8c8c8c"/></svg>
<svg style="left:18.50px;top:405.62px;" width="11.6" height="11.6"><use href="#i-proj"/></svg>
<svg style="left:18.50px;top:405.62px;" width="11.6" height="11.6"><use href="#d-cvs"/></svg>
<span class="t" style="left:33.00px;top:404.93px;font-size:9.4px;letter-spacing:0.000px;color:#6b5a3a;">&gt;</span>
<span class="t" style="left:39.40px;top:404.93px;font-size:9.4px;letter-spacing:0.112px;color:#000;">131Spring17Proj7</span>
<span class="t" style="left:124.25px;top:404.93px;font-size:9.4px;letter-spacing:0.117px;color:#957d47;">[grace.umd.edu]</span>
<svg style="left:9.60px;top:421.91px" width="6" height="6.6"><path d="M0 0 V6.6 L6 3.3z" fill="#8c8c8c"/></svg>
<svg style="left:18.50px;top:419.21px;" width="11.6" height="11.6"><use href="#i-proj"/></svg>
<span class="t" style="left:33.00px;top:418.51px;font-size:9.4px;letter-spacing:-0.076px;color:#000;">DiscussionLab</span>
<svg style="left:9.60px;top:435.50px" width="6" height="6.6"><path d="M0 0 V6.6 L6 3.3z" fill="#8c8c8c"/></svg>
<svg style="left:18.50px;top:432.80px;" width="11.6" height="11.6"><use href="#i-proj"/></svg>
<span class="t" style="left:33.00px;top:432.10px;font-size:9.4px;letter-spacing:-0.081px;color:#000;">Exam1Practice</span>
<svg style="left:9.60px;top:449.09px" width="6" height="6.6"><path d="M0 0 V6.6 L6 3.3z" fill="#8c8c8c"/></svg>
<svg style="left:18.50px;top:446.39px;" width="11.6" height="11.6"><use href="#i-proj"/></svg>
<span class="t" style="left:33.00px;top:445.69px;font-size:9.4px;letter-spacing:0.008px;color:#000;">Fehrenhiet Converter</span>
<svg style="left:9.60px;top:462.67px" width="6" height="6.6"><path d="M0 0 V6.6 L6 3.3z" fill="#8c8c8c"/></svg>
<svg style="left:18.50px;top:459.97px;" width="11.6" height="11.6"><use href="#i-proj"/></svg>
<span class="t" style="left:33.00px;top:459.27px;font-size:9.4px;letter-spacing:0.034px;color:#000;">Lab05</span>
<svg style="left:9.60px;top:476.26px" width="6" height="6.6"><path d="M0 0 V6.6 L6 3.3z" fill="#8c8c8c"/></svg>
<svg style="left:18.50px;top:473.56px;" width="11.6" height="11.6"><use href="#i-proj"/></svg>
<span class="t" style="left:33.00px;top:472.86px;font-size:9.4px;letter-spacing:-0.027px;color:#000;">Lab6</span>
<svg style="left:9.60px;top:489.85px" width="6" height="6.6"><path d="M0 0 V6.6 L6 3.3z" fill="#8c8c8c"/></svg>
<svg style="left:18.50px;top:487.15px;" width="11.6" height="11.6"><use href="#i-proj"/></svg>
<svg style="left:18.50px;top:487.15px;" width="11.6" height="11.6"><use href="#d-cvs"/></svg>
<span class="t" style="left:33.00px;top:486.45px;font-size:9.4px;letter-spacing:-0.927px;color:#000;">RPS</span>
<span class="t" style="left:57.50px;top:486.45px;font-size:9.4px;letter-spacing:0.117px;color:#957d47;">[grace.umd.edu]</span>
<svg style="left:9.60px;top:503.43px" width="6" height="6.6"><path d="M0 0 V6.6 L6 3.3z" fill="#8c8c8c"/></svg>
<svg style="left:18.50px;top:500.73px;" width="11.6" height="11.6"><use href="#i-proj"/></svg>
<svg style="left:18.50px;top:500.73px;" width="11.6" height="11.6"><use href="#d-warn"/></svg>
<span class="t" style="left:33.00px;top:500.03px;font-size:9.4px;letter-spacing:-0.202px;color:#000;">Scrap_Sheet</span>
<svg style="left:9.60px;top:517.02px" width="6" height="6.6"><path d="M0 0 V6.6 L6 3.3z" fill="#8c8c8c"/></svg>
<svg style="left:18.50px;top:514.32px;" width="11.6" height="11.6"><use href="#i-proj"/></svg>
<svg style="left:18.50px;top:514.32px;" width="11.6" height="11.6"><use href="#d-warn"/></svg>
<span class="t" style="left:33.00px;top:513.62px;font-size:9.4px;letter-spacing:-0.160px;color:#000;">Scrap_Sheet2</span>
<div class="panel" style="left:258.6px;top:25.6px;width:764px;height:593.2px;border:none;border-top:1px solid #f5f5f5;border-radius:5px 5px 3px 3px"><div class="tabbar" style="background:linear-gradient(#ececec,#fdfdfd);border-bottom:none;height:21px"></div></div>
<svg style="left:0;top:0" width="480" height="50" viewBox="0 0 480 50"><defs><linearGradient id="gTab" x1="0" y1="0" x2="0" y2="1"><stop offset="0" stop-color="#eceff4"/><stop offset="1" stop-color="#ffffff"/></linearGradient></defs><path d="M343.5 47 V30.2 Q343.5 26.2 347.5 26.2 H458.5 Q462.5 26.2 462.5 30.2 V47" fill="url(#gTab)" stroke="#dfe3ea" stroke-width="0.9"/></svg>
<svg style="left:264.40px;top:30.60px;opacity:0.5;" width="11.8" height="11.8"><use href="#i-jfile"/></svg><svg style="left:263.40px;top:29.90px;opacity:0.6;" width="11.8" height="11.8"><use href="#d-err"/></svg>
<span class="t" style="left:279.50px;top:30.30px;font-size:9.2px;letter-spacing:-0.038px;color:#707070;-webkit-text-stroke:0.05px;">*Alien.java</span>
<svg style="left:348.40px;top:30.60px;" width="11.8" height="11.8"><use href="#i-jfile"/></svg><svg style="left:347.40px;top:29.90px;" width="11.8" height="11.8"><use href="#d-err"/></svg>
<span class="t" style="left:362.40px;top:30.30px;font-size:9.2px;letter-spacing:0.002px;color:#000;">AlienDatabase.java</span>
<svg style="left:448px;top:32.6px" width="8.6" height="8.6" viewBox="0 0 9 9"><path d="M0.8 0.8 h2 L4.5 2.8 L6.2 0.8 h2 v2 L6.2 4.5 L8.2 6.2 v2 h-2 L4.5 6.2 L2.8 8.2 h-2 v-2 L2.8 4.5 L0.8 2.8z" fill="#fff" stroke="#1a1a1a" stroke-width="0.9"/></svg>
<svg style="left:468.40px;top:30.60px;opacity:0.5;" width="11.8" height="11.8"><use href="#i-jfile"/></svg>
<span class="t" style="left:481.60px;top:30.30px;font-size:9.2px;letter-spacing:0.026px;color:#707070;-webkit-text-stroke:0.05px;">AlienTesting.java</span>
<div class="abs" style="left:987px;top:32px;width:8px;height:3px;box-sizing:border-box;border:1px solid #1a1a1a;background:#fff"></div><div class="abs" style="left:1005.2px;top:32.2px;width:8.2px;height:7.6px;box-sizing:border-box;border:1.1px solid #1a1a1a;background:linear-gradient(#999 0 1.4px,#fff 1.4px)"></div>
<div class="abs" style="left:292px;top:48px;width:719px;height:11.8px;background:#e8f2fe"></div>
<div class="abs" style="left:262px;top:48px;width:9px;height:35.8px;box-sizing:border-box;border-top:0.6px solid #a6cbf8;border-bottom:0.6px solid #a6cbf8;background:repeating-conic-gradient(#cde1fa 0 25%,#b3d1f6 0 50%) 0 0/2.2px 2.2px"></div>
<div class="ln" style="top:50.20px">1</div>
<div class="code" style="top:49.40px"><span class="k">import</span> java.util.ArrayList;</div>
<div class="ln" style="top:62.20px">2</div>
<div class="code" style="top:61.40px"><span class="k">import</span> java.util.Collections;</div>
<div class="ln" style="top:74.20px">3</div>
<div class="code" style="top:73.40px"><span class="k">import</span> java.util.Random;</div>
<div class="ln" style="top:86.20px">4</div>
<div class="ln" style="top:98.20px">5</div>
<div class="code" style="top:97.40px"><span class="k">public</span> <span class="k">class</span> AlienDatabase {</div>
<div class="ln" style="top:110.20px">6</div>
<div class="ln" style="top:122.20px">7</div>
<div class="code" style="top:121.40px">    <span class="c">// REMOVE THIS COMMENT AND IMPLEMENT THIS CLASS ACCORDING</span></div>
<div class="ln" style="top:134.20px">8</div>
<div class="code" style="top:133.40px">    <span class="c">// TO THE INSTRUCTIONS THAT HAVE BEEN PROVIDED.</span></div>
<div class="ln" style="top:146.20px">9</div>
<div class="ln" style="top:158.20px">10</div>
<div class="code" style="top:157.40px">    <span class="k">public</span> <span class="k">void</span> displayDatabase() {</div>
<div class="ln" style="top:170.20px">11</div>
<div class="code" style="top:169.40px">        <span class="k">for</span> (ArrayList&lt;Alien&gt; <span class="v">row</span> : <span class="e">data</span>) {</div>
<div class="ln" style="top:182.20px">12</div>
<div class="code" style="top:181.40px">            <span class="k">for</span> (Alien <span class="v">guy</span> : <span class="v">row</span>) {</div>
<div class="ln" style="top:194.20px">13</div>
<div class="code" style="top:193.40px">                System.<span class="f">out</span>.print(<span class="v">guy</span> + <span class="s">&quot;   &quot;</span>);</div>
<div class="ln" style="top:206.20px">14</div>
<div class="code" style="top:205.40px">            }</div>
<div class="ln" style="top:218.20px">15</div>
<div class="code" style="top:217.40px">            System.<span class="f">out</span>.println();</div>
<div class="ln" style="top:230.20px">16</div>
<div class="code" style="top:229.40px">        }</div>
<div class="ln" style="top:242.20px">17</div>
<div class="code" style="top:241.40px">    }</div>
<div class="ln" style="top:254.20px">18</div>
<div class="ln" style="top:266.20px">19</div>
<div class="code" style="top:265.40px">    <span class="k">public</span> <span class="k">static</span> <span class="k">void</span> main(String[] <span class="v">args</span>) {</div>
<div class="ln" style="top:278.20px">20</div>
<div class="ln" style="top:290.20px">21</div>
<div class="code" style="top:289.40px">        <span class="c">// create and display a database full of random aliens</span></div>
<div class="ln" style="top:302.20px">22</div>
<div class="code" style="top:301.40px">        AlienDatabase <span class="v">db</span> = <span class="k">new</span> AlienDatabase();</div>
<div class="ln" style="top:314.20px">23</div>
<div class="code" style="top:313.40px">        <span class="k">for</span> (<span class="k">int</span> <span class="v">i</span> = 0; <span class="v">i</span> &lt; 100; <span class="v">i</span>++) {</div>
<div class="ln" style="top:326.20px">24</div>
<div class="code" style="top:325.40px">            <span class="k">int</span> <span class="v">numHeads</span> = (<span class="k">int</span>)(Math.<span class="i">random</span>() * 10) + 1;</div>
<div class="ln" style="top:338.20px">25</div>
<div class="code" style="top:337.40px">            String <span class="v">name</span> = <span class="i">makeRandomString</span>();</div>
<div class="ln" style="top:350.20px">26</div>
<div class="code" style="top:349.40px">            <span class="v">db</span>.<span class="e">addAlien</span>(<span class="k">new</span> Alien(<span class="v">numHeads</span>, <span class="v">name</span>));</div>
<div class="ln" style="top:362.20px">27</div>
<div class="code" style="top:361.40px">        }</div>
<div class="ln" style="top:374.20px">28</div>
<div class="code" style="top:373.40px">        <span class="v">db</span>.displayDatabase();</div>
<div class="ln" style="top:386.20px">29</div>
<div class="ln" style="top:398.20px">30</div>
<div class="code" style="top:397.40px">    }</div>
<div class="ln" style="top:410.20px">31</div>
<div class="ln" style="top:422.20px">32</div>
<div class="code" style="top:421.40px">    <span class="k">private</span> <span class="k">static</span> Random <span class="f">random</span> = <span class="k">new</span> Random();</div>
<div class="ln" style="top:434.20px">33</div>
<div class="ln" style="top:446.20px">34</div>
<div class="code" style="top:445.40px">    <span class="k">public</span> <span class="k">static</span> String makeRandomString() {</div>
<div class="ln" style="top:458.20px">35</div>
<div class="code" style="top:457.40px">        StringBuffer <span class="v">answer</span> = <span class="k">new</span> StringBuffer();</div>
<div class="ln" style="top:470.20px">36</div>
<div class="code" style="top:469.40px">        <span class="k">int</span> <span class="v">length</span> = <span class="f">random</span>.nextInt(10) + 3;</div>
<div class="ln" style="top:482.20px">37</div>
<div class="code" style="top:481.40px">        <span class="k">for</span> (<span class="k">int</span> <span class="v">i</span> = 0; <span class="v">i</span> &lt; <span class="v">length</span>; <span class="v">i</span>++) {</div>
<div class="ln" style="top:494.20px">38</div>
<div class="code" style="top:493.40px">            <span class="v">answer</span>.append(<span class="i">getRandomCharacter</span>());</div>
<div class="ln" style="top:506.20px">39</div>
<div class="code" style="top:505.40px">        }</div>
<div class="ln" style="top:518.20px">40</div>
<div class="code" style="top:517.40px">        <span class="k">return</span> <span class="v">answer</span>.toString();</div>
<div class="ln" style="top:530.20px">41</div>
<div class="code" style="top:529.40px">    }</div>
<div class="ln" style="top:542.20px">42</div>
<div class="ln" style="top:554.20px">43</div>
<div class="code" style="top:553.40px">    <span class="k">private</span> <span class="k">static</span> <span class="k">char</span> getRandomCharacter() {</div>
<div class="ln" style="top:566.20px">44</div>
<div class="code" style="top:565.40px">        <span class="k">return</span> (<span class="k">char</span>)(<span class="f">random</span>.nextInt(26) + <span class="s">&#x27;A&#x27;</span>);</div>
<div class="ln" style="top:578.20px">45</div>
<div class="code" style="top:577.40px">    }</div>
<div class="ln" style="top:590.20px">46</div>
<div class="code" style="top:589.40px">}</div>
<div class="ln" style="top:602.20px">47</div>
<svg style="left:282.3px;top:50.40px" width="7.6" height="7.6" viewBox="0 0 7.6 7.6"><circle cx="3.8" cy="3.8" r="3.6" fill="#cddbe8"/><circle cx="3.8" cy="3.8" r="3.3" fill="none" stroke="#b4c6d8" stroke-width="0.5"/><path d="M1.8 3.8 h4" stroke="#8ea3ba" stroke-width="0.9"/></svg>
<svg style="left:282.3px;top:158.40px" width="7.6" height="7.6" viewBox="0 0 7.6 7.6"><circle cx="3.8" cy="3.8" r="3.6" fill="#cddbe8"/><circle cx="3.8" cy="3.8" r="3.3" fill="none" stroke="#b4c6d8" stroke-width="0.5"/><path d="M1.8 3.8 h4" stroke="#8ea3ba" stroke-width="0.9"/></svg>
<svg style="left:282.3px;top:266.40px" width="7.6" height="7.6" viewBox="0 0 7.6 7.6"><circle cx="3.8" cy="3.8" r="3.6" fill="#cddbe8"/><circle cx="3.8" cy="3.8" r="3.3" fill="none" stroke="#b4c6d8" stroke-width="0.5"/><path d="M1.8 3.8 h4" stroke="#8ea3ba" stroke-width="0.9"/></svg>
<svg style="left:282.3px;top:446.40px" width="7.6" height="7.6" viewBox="0 0 7.6 7.6"><circle cx="3.8" cy="3.8" r="3.6" fill="#cddbe8"/><circle cx="3.8" cy="3.8" r="3.3" fill="none" stroke="#b4c6d8" stroke-width="0.5"/><path d="M1.8 3.8 h4" stroke="#8ea3ba" stroke-width="0.9"/></svg>
<svg style="left:282.3px;top:554.40px" width="7.6" height="7.6" viewBox="0 0 7.6 7.6"><circle cx="3.8" cy="3.8" r="3.6" fill="#cddbe8"/><circle cx="3.8" cy="3.8" r="3.3" fill="none" stroke="#b4c6d8" stroke-width="0.5"/><path d="M1.8 3.8 h4" stroke="#8ea3ba" stroke-width="0.9"/></svg>
<svg style="left:261.4px;top:169.00px" width="10" height="10.4" viewBox="0 0 10 10.4"><path d="M2.8 0.5 a2.5 2.5 0 0 1 1.4 4.6 v1.4 h-2.8 v-1.4 a2.5 2.5 0 0 1 1.4-4.6z" fill="#f9dc8c" stroke="#cfa040" stroke-width="0.6"/><path d="M1.4 7.4 h2.8 M1.6 8.5 h2.4" stroke="#8a8a96" stroke-width="0.7"/><rect x="4.3" y="4" width="5.6" height="6.2" fill="#e22a44"/><path d="M5.5 5.4 l3.2 3.4 M8.7 5.4 l-3.2 3.4" stroke="#fff" stroke-width="1.1"/></svg>
<svg style="left:261.4px;top:349.00px" width="10" height="10.4" viewBox="0 0 10 10.4"><path d="M2.8 0.5 a2.5 2.5 0 0 1 1.4 4.6 v1.4 h-2.8 v-1.4 a2.5 2.5 0 0 1 1.4-4.6z" fill="#f9dc8c" stroke="#cfa040" stroke-width="0.6"/><path d="M1.4 7.4 h2.8 M1.6 8.5 h2.4" stroke="#8a8a96" stroke-width="0.7"/><rect x="4.3" y="4" width="5.6" height="6.2" fill="#e22a44"/><path d="M5.5 5.4 l3.2 3.4 M8.7 5.4 l-3.2 3.4" stroke="#fff" stroke-width="1.1"/></svg>
<div class="abs" style="left:1013px;top:172.00px;width:7px;height:4px;box-sizing:border-box;border:1px solid #ff3d94;background:#ffd6e8"></div>
<div class="abs" style="left:1013px;top:352.00px;width:7px;height:4px;box-sizing:border-box;border:1px solid #ff3d94;background:#ffd6e8"></div>
<span class="t" style="left:2.60px;top:621.30px;font-size:9.4px;letter-spacing:0.096px;color:#111;">AlienDatabase.java - 131Spring17Lab07/src</span>
<div class="abs" style="left:796.1px;top:623.4px;width:1.7px;height:12.5px;background:repeating-linear-gradient(180deg,#aaa69a 0 1.7px,transparent 1.7px 3.6px)"></div>
</body></html>
